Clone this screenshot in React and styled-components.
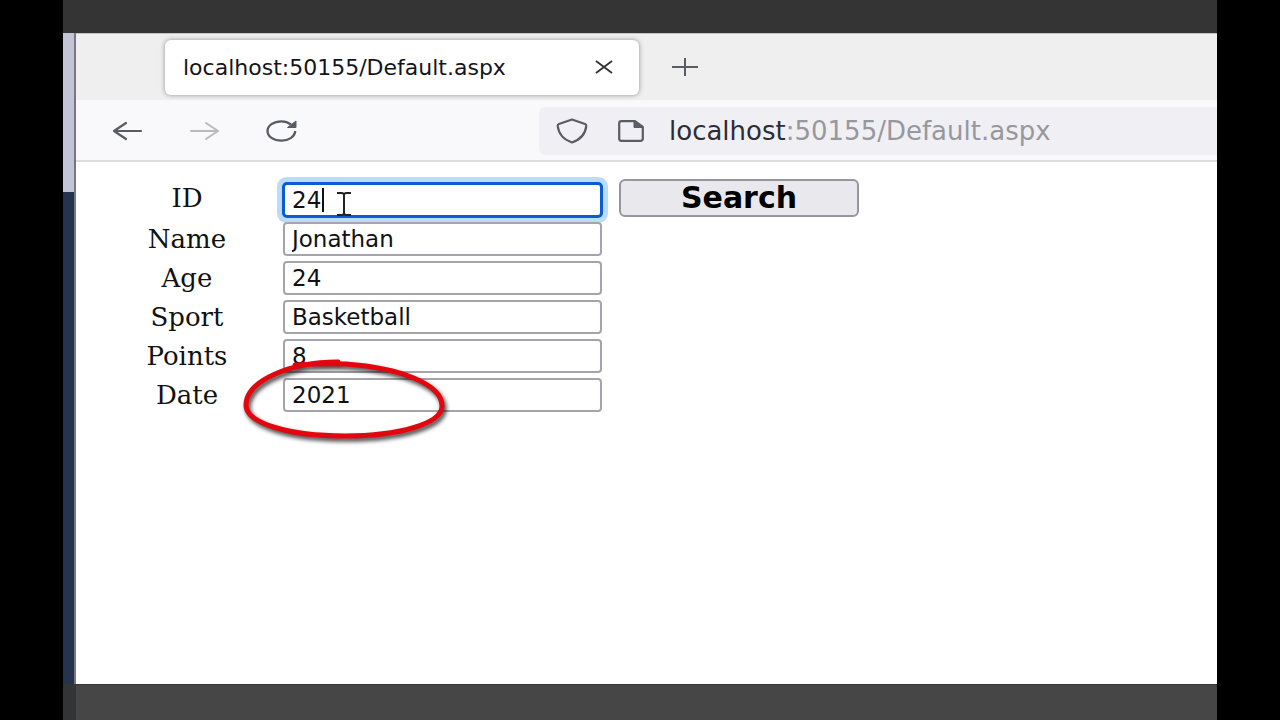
import React, {useState} from 'react';
import styled, {createGlobalStyle} from 'styled-components'

const GlobalStyle = createGlobalStyle`
  * {
    box-sizing: border-box;
  }

  body {
    margin: 0;
    background: #000;
    font-family: "DejaVu Sans", sans-serif;
  }

  button, input {
    font-family: inherit;
  }
`

const Screen = styled.div`
  display: flex;
  flex-direction: column;
  min-height: 100vh;
  margin: 0 63px;
`

const TopBand = styled.div`
  height: 33px;
  background: #343434;
`

const BottomBand = styled.div`
  height: 36px;
  background: #464646;
  border-top: 1px solid #353535;
  border-left: 13px solid #333435;
`

const Desktop = styled.div`
  flex: 1;
  display: flex;
`

const Backdrop = styled.div`
  width: 13px;
  border-right: 2px solid #767784;
  background: linear-gradient(#c3c4d6 159px, #25334f 159px);
`

const Browser = styled.div`
  flex: 1;
  min-width: 0;
  background: #fff;
  border-top: 1px solid #c4c4c4;
`

const TabBar = styled.div`
  display: flex;
  align-items: center;
  gap: 33px;
  height: 66px;
  padding-left: 89px;
  background: #efefef;
`

const Tab = styled.div`
  display: flex;
  align-items: center;
  justify-content: space-between;
  width: 474px;
  height: 55px;
  padding: 0 26px 0 18px;
  border-radius: 6px;
  background: #fff;
  box-shadow: 0 0 5px rgba(0, 0, 0, 0.4);
  color: #15141a;
  font-size: 22px;
`

const IconButton = styled.button`
  display: flex;
  padding: 0;
  border: 0;
  background: none;
  color: ${props => props.disabled ? '#b9b9be' : '#5b5b66'};
`

const Toolbar = styled.div`
  display: flex;
  align-items: center;
  gap: 46px;
  height: 62px;
  padding: 2px 0 0 36px;
  background: #f9f9fb;
  border-bottom: 2px solid #dcdcde;
`

const AddressBar = styled.div`
  flex: 1;
  display: flex;
  align-items: center;
  height: 48px;
  margin-left: 196px;
  padding-left: 17px;
  border-radius: 6px 0 0 6px;
  background: #f0f0f4;
`

const SiteIcons = styled.div`
  display: flex;
  align-items: center;
  gap: 30px;
  margin-right: 25px;
  color: #5b5b66;

  svg {
    display: block;
  }
`

const Url = styled.div`
  color: #98979e;
  font-size: 26px;

  span {
    color: #2d2c36;
  }
`

const Form = styled.form`
  position: relative;
  display: grid;
  grid-template-columns: 150px 319px 240px;
  column-gap: 17px;
  row-gap: 5px;
  align-items: end;
  padding: 17px 0 0 40px;
`

const Label = styled.label`
  grid-column: 1;
  align-self: center;
  padding-right: 8px;
  color: #111;
  font-family: "DejaVu Serif", serif;
  font-size: 26px;
  line-height: 34px;
  text-align: center;
`

const Field = styled.div`
  position: relative;
`

const Input = styled.input`
  display: block;
  width: 100%;
  height: 34px;
  padding: 0 7px;
  border: 2px solid ${props => props.$active ? '#0d5bd0' : '#a5a4ac'};
  border-radius: 4px;
  outline: 0;
  background: #fff;
  box-shadow: ${props => props.$active ? '0 0 0 1px #0d5bd0, 0 0 0 6px #b9dcf8' : 'none'};
  color: #111;
  font-size: 23px;
`

const Caret = styled.span`
  position: absolute;
  top: 5px;
  left: 39px;
  width: 2px;
  height: 24px;
  background: #111;
`

const Pointer = styled.svg`
  position: absolute;
  top: 8px;
  left: 53px;
`

const SearchButton = styled.button`
  height: 38px;
  padding: 0;
  border: 2px solid #97969f;
  border-radius: 6px;
  background: #e9e9ed;
  color: #000;
  font-size: 30px;
  font-weight: bold;
  line-height: 34px;
`

const Marker = styled.svg`
  position: absolute;
  top: 193px;
  left: 164px;
  filter: drop-shadow(2px 3px 2px rgba(0, 0, 0, 0.75));
  pointer-events: none;
`

const fields = [
  {id: 'id', label: 'ID', value: '24'},
  {id: 'name', label: 'Name', value: 'Jonathan'},
  {id: 'age', label: 'Age', value: '24'},
  {id: 'sport', label: 'Sport', value: 'Basketball'},
  {id: 'points', label: 'Points', value: '8'},
  {id: 'date', label: 'Date', value: '2021'},
]

function Tabs() {
  return (
    <TabBar>
      <Tab>
        localhost:50155/Default.aspx
        <IconButton aria-label="Close tab">
          <svg width="18" height="14" viewBox="0 0 18 14" fill="none" stroke="#333" strokeWidth="1.8">
            <path d="M1 1L17 13M17 1L1 13"/>
          </svg>
        </IconButton>
      </Tab>
      <IconButton aria-label="New tab">
        <svg width="26" height="18" viewBox="0 0 26 18" fill="none" stroke="currentColor" strokeWidth="2">
          <path d="M0 9H26M13 0V18"/>
        </svg>
      </IconButton>
    </TabBar>
  )
}

function Navigation() {
  return (
    <Toolbar>
      <IconButton aria-label="Back">
        <svg width="31" height="20" viewBox="0 0 31 20" fill="none" stroke="currentColor" strokeWidth="2.2"
             strokeLinecap="round" strokeLinejoin="round">
          <path d="M14 2L2 10L14 18M2 10H29"/>
        </svg>
      </IconButton>
      <IconButton aria-label="Forward" disabled>
        <svg width="31" height="20" viewBox="0 0 31 20" fill="none" stroke="currentColor" strokeWidth="2"
             strokeLinecap="round" strokeLinejoin="round">
          <path d="M17 2L29 10L17 18M29 10H2"/>
        </svg>
      </IconButton>
      <IconButton aria-label="Reload">
        <svg width="31" height="22" viewBox="0 0 31 22" fill="none" stroke="currentColor" strokeWidth="2.3">
          <path d="M25 4.500C22 2.200 19 1.300 15.500 1.300C7.500 1.300 1.500 5.500 1.500 11C1.500 16.500 7.500 20.700 15.500 20.700C22.500 20.700 28.500 17 29.300 11"/>
          <path d="M30 1V7.500H21.500Z" fill="currentColor" strokeWidth="1" strokeLinejoin="round"/>
        </svg>
      </IconButton>
      <AddressBar>
        <SiteIcons>
          <svg width="32" height="26" viewBox="0 0 32 26" fill="none" stroke="currentColor" strokeWidth="2.2"
               strokeLinejoin="round">
            <path d="M16 1.500L29 6Q30.500 6.500 30.300 8C29.500 15 26 21 16 24.500C6 21 2.500 15 1.700 8Q1.500 6.500 3 6Z"/>
          </svg>
          <svg width="26" height="22" viewBox="0 0 26 22" fill="none" stroke="currentColor" strokeWidth="2.2"
               strokeLinejoin="round">
            <path d="M3.500 1.200H17L24.800 7V18.800Q24.800 20.800 22.500 20.800H3.500Q1.200 20.800 1.200 18.800V3.200Q1.200 1.200 3.500 1.200Z"/>
            <path d="M16 1.500V7.500H24.500Z" fill="currentColor" strokeWidth="1"/>
          </svg>
        </SiteIcons>
        <Url><span>localhost</span>:50155/Default.aspx</Url>
      </AddressBar>
    </Toolbar>
  )
}

function SearchForm() {
  const [values, setValues] = useState(Object.fromEntries(fields.map(f => [f.id, f.value])))

  return (
    <Form onSubmit={e => e.preventDefault()}>
      {fields.map(({id, label}) => (
        <React.Fragment key={id}>
          <Label htmlFor={id}>{label}</Label>
          <Field>
            <Input id={id} type="text" $active={id === 'id'} value={values[id]}
                   onChange={e => setValues({...values, [id]: e.target.value})}/>
            {id === 'id' && <Caret/>}
            {id === 'id' && (
              <Pointer width="16" height="26" viewBox="0 0 16 26" fill="none" stroke="#222" strokeWidth="2">
                <path d="M1 2H6L8 3L10 2H15M8 3V23M1 24H6L8 23L10 24H15"/>
              </Pointer>
            )}
          </Field>
          {id === 'id' && <SearchButton type="submit">Search</SearchButton>}
        </React.Fragment>
      ))}
      <Marker width="210" height="90" viewBox="0 0 210 90" fill="none" stroke="#e3060e" strokeWidth="5"
              strokeLinecap="round">
        <path d="M55 10C72 9 90 8 106 9C160 13 202 29 202 51C202 69 158 81 105 81C48 81 6 68 6 50C6 26 50 7 98 7"/>
      </Marker>
    </Form>
  )
}

export default function App() {
  return (
    <>
      <GlobalStyle/>
      <Screen>
        <TopBand/>
        <Desktop>
          <Backdrop/>
          <Browser>
            <Tabs/>
            <Navigation/>
            <SearchForm/>
          </Browser>
        </Desktop>
        <BottomBand/>
      </Screen>
    </>
  )
}
